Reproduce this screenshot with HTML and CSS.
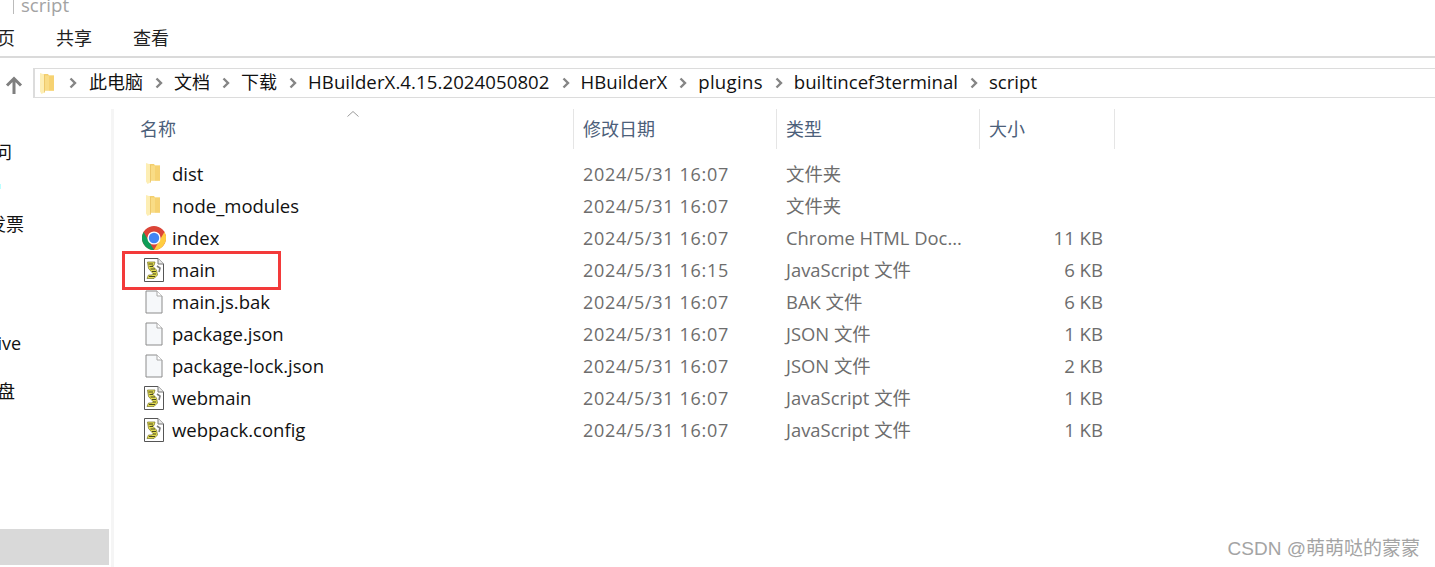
FILE: index.html
```html
<!DOCTYPE html>
<html lang="zh">
<head>
<meta charset="utf-8">
<title>script</title>
<link rel="stylesheet" href="styles.css">
</head>
<body>
<svg class="defs" width="0" height="0" aria-hidden="true">
  <symbol id="folder" viewBox="0 0 14 21">
    <path d="M1 1 H8 L9 2.5 H14 V17.5 H1 Z" fill="#f4cf6e"/>
    <path d="M4.5 2.5 H14 V17.5 H4.5 Z" fill="#f9dc86"/>
    <path d="M0 0 L4.5 1.5 V19.5 L1.5 21 L0 18.5 Z" fill="#fdeeb4"/>
    <path d="M4.5 1.5 V19.5" stroke="#eac25f" stroke-width=".8"/>
    <path d="M9 3 H14 V17.5 H9 Z" fill="#f6d272"/>
  </symbol>
  <symbol id="blank" viewBox="0 0 18 24">
    <path d="M1 1 H12 L17 6 V23 H1 Z" fill="#f6f8fa" stroke="#8c8c8c" stroke-width="1"/>
    <path d="M12 1 V6 H17" fill="#fff" stroke="#a8a8a8" stroke-width="1"/>
  </symbol>
  <symbol id="js" viewBox="0 0 20 24">
    <path d="M.5 .5 H14 L19.5 6 V23.5 H.5 Z" fill="#fff" stroke="#555" stroke-width="1"/>
    <path d="M14 .5 V6 H19.5" fill="#e9e9e9" stroke="#777" stroke-width="1"/>
    <path d="M3.5 4 H11 L10 7.5 H8 L12.5 12 L13.5 17 L10 20.5 H3 L4.5 17 H8 L9 15.5 L4.5 10.5 Z" fill="#e3dc50" stroke="#77742a" stroke-width=".7"/>
    <path d="M4.5 6 H9 M5.5 8.5 H9 M6.5 11 H11 M8 13.5 H12 M9 16 H12 M5 18.5 H11" stroke="#35351c" stroke-width=".9"/>
    <path d="M13 8 L16 10 L15 14" fill="none" stroke="#7c7c7c" stroke-width="1.6"/>
  </symbol>
  <symbol id="chrome" viewBox="0 0 24 24">
    <circle cx="12" cy="12" r="12" fill="#db4437"/>
    <path d="M1.6 6 L7 15.5 L12 24 A12 12 0 0 1 1.6 6 Z" fill="#0f9d58"/>
    <path d="M12 24 L17.2 15 L22.4 6 A12 12 0 0 1 12 24 Z" fill="#ffcd40"/>
    <circle cx="12" cy="12" r="6.6" fill="#fff"/>
    <circle cx="12" cy="12" r="5.2" fill="#4285f4"/>
  </symbol>
  <symbol id="chev" viewBox="0 0 8 12">
    <path d="M1.5 1.5 L6 6 L1.5 10.5" fill="none" stroke="#858585" stroke-width="2.4"/>
  </symbol>
</svg>

<div class="window">
  <header class="title"><span class="title-text">script</span></header>

  <nav class="tabs">
    <span class="tab tab-home">页</span>
    <span class="tab tab-share">共享</span>
    <span class="tab tab-view">查看</span>
  </nav>

  <div class="addressbar">
    <svg class="up" viewBox="0 0 18 18" width="18" height="18"><path d="M9 3 V18 M2 9.5 L9 2.5 L16 9.5" fill="none" stroke="#7f7f7f" stroke-width="3"/></svg>
    <div class="path">
      <svg class="path-folder"><use href="#folder"/></svg>
      <svg class="chev first"><use href="#chev"/></svg><span>此电脑</span>
      <svg class="chev"><use href="#chev"/></svg><span>文档</span>
      <svg class="chev"><use href="#chev"/></svg><span>下载</span>
      <svg class="chev"><use href="#chev"/></svg><span class="latin num">HBuilderX.4.15.2024050802</span>
      <svg class="chev"><use href="#chev"/></svg><span class="latin">HBuilderX</span>
      <svg class="chev"><use href="#chev"/></svg><span class="latin wide">plugins</span>
      <svg class="chev"><use href="#chev"/></svg><span class="latin">builtincef3terminal</span>
      <svg class="chev"><use href="#chev"/></svg><span class="latin">script</span>
    </div>
  </div>

  <div class="main">
    <aside class="sidebar">
      <div class="side-item quick">快速访问</div>
      <div class="speck"></div>
      <div class="side-item invoice">电子发票</div>
      <div class="side-item drive">OneDrive</div>
      <div class="side-item disk">百度网盘</div>
      <div class="side-selected"></div>
    </aside>

    <section class="files">
      <div class="head">
        <div class="hcell"><span>名称</span><svg class="sort" viewBox="0 0 12 6" width="12" height="6"><path d="M.5 5.5 L6 .5 L11.5 5.5" fill="none" stroke="#9a9a9a"/></svg></div>
        <div class="hcell"><span>修改日期</span></div>
        <div class="hcell"><span>类型</span></div>
        <div class="hcell"><span>大小</span></div>
      </div>

      <div class="rows">
        <div class="row"><div class="name"><svg class="ic ic-folder"><use href="#folder"/></svg>dist</div><div class="cell date">2024/5/31 16:07</div><div class="cell type">文件夹</div><div class="cell size"></div></div>
        <div class="row"><div class="name"><svg class="ic ic-folder"><use href="#folder"/></svg>node_modules</div><div class="cell date">2024/5/31 16:07</div><div class="cell type">文件夹</div><div class="cell size"></div></div>
        <div class="row"><div class="name"><svg class="ic ic-chrome"><use href="#chrome"/></svg>index</div><div class="cell date">2024/5/31 16:07</div><div class="cell type">Chrome HTML Doc...</div><div class="cell size">11 KB</div></div>
        <div class="row"><div class="name"><svg class="ic ic-js"><use href="#js"/></svg>main</div><div class="cell date">2024/5/31 16:15</div><div class="cell type">JavaScript 文件</div><div class="cell size">6 KB</div><div class="highlight"></div></div>
        <div class="row"><div class="name"><svg class="ic ic-blank"><use href="#blank"/></svg>main.js.bak</div><div class="cell date">2024/5/31 16:07</div><div class="cell type">BAK 文件</div><div class="cell size">6 KB</div></div>
        <div class="row"><div class="name"><svg class="ic ic-blank"><use href="#blank"/></svg>package.json</div><div class="cell date">2024/5/31 16:07</div><div class="cell type">JSON 文件</div><div class="cell size">1 KB</div></div>
        <div class="row"><div class="name"><svg class="ic ic-blank"><use href="#blank"/></svg>package-lock.json</div><div class="cell date">2024/5/31 16:07</div><div class="cell type">JSON 文件</div><div class="cell size">2 KB</div></div>
        <div class="row"><div class="name"><svg class="ic ic-js"><use href="#js"/></svg>webmain</div><div class="cell date">2024/5/31 16:07</div><div class="cell type">JavaScript 文件</div><div class="cell size">1 KB</div></div>
        <div class="row"><div class="name"><svg class="ic ic-js"><use href="#js"/></svg>webpack.config</div><div class="cell date">2024/5/31 16:07</div><div class="cell type">JavaScript 文件</div><div class="cell size">1 KB</div></div>
      </div>
    </section>
  </div>

  <div class="watermark">CSDN @萌萌哒的蒙蒙</div>
</div>
</body>
</html>
```

FILE: styles.css
```css
* { box-sizing: border-box; }
html, body { margin: 0; height: 100%; background: #fff; overflow: hidden; }
body { font-family: "Open Sans", "Noto Sans CJK SC", sans-serif; font-size: 18px; color: #111; }
.defs { display: block; height: 0; }

.window { position: relative; width: 1435px; height: 567px; display: flex; flex-direction: column; overflow: hidden; }

.title { height: 18px; padding: 0 0 4px 13px; display: flex; align-items: flex-end; overflow: hidden; }
.title-text { border-left: 1px solid #bbb; padding-left: 7px; line-height: 18px; height: 14px; font-size: 18.6px; display: flex; align-items: flex-end; color: #a3a3a3; }

.tabs { height: 40px; border-bottom: 2px solid #dadada; display: flex; align-items: center; line-height: 24px; color: #222; padding-top: 2px; }
.tab-home { margin-left: -3px; width: 18px; overflow: hidden; display: flex; justify-content: flex-end; }
.tab-share { margin-left: 41px; }
.tab-view { margin-left: 41px; }

.addressbar { margin-top: 10px; height: 30px; display: flex; align-items: center; padding-left: 5px; }
.up { flex: none; margin-top: 4px; }
.path { flex: 1; height: 30px; margin-left: 10px; border-style: solid; border-color: #dcdcdc; border-width: 1.5px 0 1.5px 2px; display: flex; align-items: center; padding: 0 0 4px 5px; white-space: nowrap; color: #111; }
.path-folder { width: 14px; height: 21px; flex: none; margin-top: 5px; }
.chev { width: 8px; height: 12px; flex: none; margin: 4px 11px 0 12px; }
.chev.first { margin-left: 15px; margin-right: 12px; }
.latin { font-size: 18.6px; }
.num { letter-spacing: .08px; }
.wide { letter-spacing: .3px; }

.main { flex: 1; display: flex; min-height: 0; margin-top: 11px; }

.sidebar { width: 114px; flex: none; border-right: 3px solid #f5f5f5; display: flex; flex-direction: column; overflow: hidden; position: relative; padding-top: 31px; }
.side-item { height: 24px; line-height: 24px; white-space: nowrap; color: #111; }
.quick { margin-left: -60px; }
.speck { width: 1px; height: 5px; background: #bff; margin-top: 20px; }
.invoice { margin-left: -48px; margin-top: 23px; }
.drive { margin-left: -58px; margin-top: 95px; }
.disk { margin-left: -57px; margin-top: 24px; }
.side-selected { position: absolute; left: 0; top: 420px; width: 109px; height: 36px; background: #d9d9d9; }

.files { flex: 1; min-width: 0; }

.head { display: grid; grid-template-columns: 460px 203px 203px 135px; height: 41px; }
.hcell { position: relative; border-right: 1px solid #e5e5e5; height: 40px; display: flex; align-items: center; padding: 0 0 2px 26px; color: #4c607a; }
.hcell + .hcell { padding-left: 9px; }
.sort { position: absolute; left: 233px; top: 2px; }

.rows { padding-top: 8px; }
.row { display: grid; grid-template-columns: 460px 203px 203px 135px; height: 32px; align-items: center; position: relative; }
.name { display: flex; align-items: center; padding: 0 0 2px 58px; position: relative; white-space: nowrap; color: #111; font-size: 18.5px; }
.cell { padding-left: 9px; color: #6d6d6d; white-space: nowrap; }
.date { letter-spacing: .67px; }
.type { font-size: 18.4px; margin-top: -2px; }
.size { text-align: right; padding: 0 12px 2px 0; font-size: 18.6px; }
.ic { position: absolute; margin-top: 1px; }
.ic-folder { left: 32px; width: 14px; height: 21px; }
.ic-chrome { left: 28px; width: 24px; height: 24px; }
.ic-js { left: 30px; width: 20px; height: 24px; }
.ic-blank { left: 31px; width: 18px; height: 24px; }

.highlight { position: absolute; left: 8px; top: -3px; width: 159px; height: 39px; border: 3px solid #f33a3a; pointer-events: none; }

.watermark { position: absolute; right: 15px; bottom: 7px; font-family: "Liberation Sans", "Noto Sans CJK SC", sans-serif; font-size: 19px; line-height: 22px; color: #a4a4a4; }
```
